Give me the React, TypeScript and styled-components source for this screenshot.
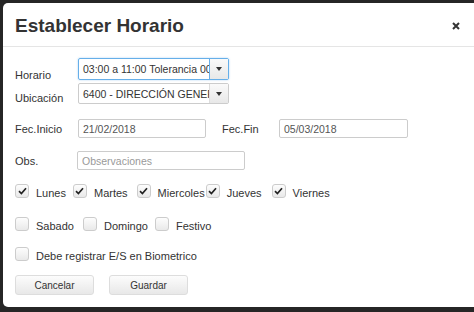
import React from 'react';
import styled, { createGlobalStyle } from 'styled-components';

const GlobalStyle = createGlobalStyle`
  html, body {
    margin: 0;
    padding: 0;
    background: #262626;
    font-family: "Liberation Sans", Arial, sans-serif;
    color: #333;
  }
  #root {
    padding: 3px 0 0 3px;
    height: 312px;
    box-sizing: border-box;
    overflow: hidden;
  }
`;

const Modal = styled.div`
  width: 480px;
  height: 304px;
  background: #fff;
  border-radius: 5px;
  display: flex;
  flex-direction: column;
`;

const Header = styled.div`
  height: 44px;
  box-sizing: border-box;
  border-bottom: 1px solid #e5e5e5;
  display: flex;
  align-items: center;
  padding: 0 0 0 12px;
  width: 471px;
`;

const Title = styled.h4`
  margin: 0;
  flex: 1;
  font-size: 19px;
  font-weight: bold;
  color: #333;
  padding-top: 2px;
`;

const Close = styled.span`
  display: flex;
  margin-right: 14px;
  padding-top: 3px;
  opacity: 0.85;
`;

const Body = styled.div`
  padding: 11px 0 0 12px;
  display: flex;
  flex-direction: column;
`;

const Row = styled.div<{ $mt?: number; $h: number }>`
  display: flex;
  align-items: center;
  height: ${(p) => p.$h}px;
  margin-top: ${(p) => p.$mt ?? 0}px;
`;

const Label = styled.span<{ $w: number; $dy?: number; $ml?: number }>`
  width: ${(p) => p.$w}px;
  margin-left: ${(p) => p.$ml ?? 0}px;
  font-size: 11px;
  color: #333;
  position: relative;
  top: ${(p) => p.$dy ?? 0}px;
`;

const Select = styled.div<{ $focus?: boolean }>`
  width: 151px;
  height: 100%;
  box-sizing: border-box;
  border: 1px solid ${(p) => (p.$focus ? '#66afe9' : '#ccc')};
  border-radius: 2px;
  display: flex;
  box-shadow: ${(p) => (p.$focus ? '0 0 2px rgba(102,175,233,0.6)' : 'none')};
`;

const SelectText = styled.span`
  flex: 1;
  overflow: hidden;
  white-space: nowrap;
  font-size: 10.5px;
  color: #333;
  padding: 0 0 0 4px;
  display: flex;
  align-items: center;
`;

const Arrow = styled.span<{ $focus?: boolean }>`
  width: 19px;
  flex-shrink: 0;
  box-sizing: border-box;
  border-left: 1px solid ${(p) => (p.$focus ? '#66afe9' : '#ddd')};
  background: linear-gradient(#fafafa, #e8e8e8);
  display: flex;
  align-items: center;
  justify-content: center;
  &::after {
    content: '';
    border-left: 3px solid transparent;
    border-right: 3px solid transparent;
    border-top: 4px solid #333;
  }
`;

const Input = styled.div<{ $w: number; $placeholder?: boolean }>`
  width: ${(p) => p.$w}px;
  height: 100%;
  box-sizing: border-box;
  border: 1px solid #ccc;
  border-radius: 2px;
  font-size: 10.5px;
  color: ${(p) => (p.$placeholder ? '#999' : '#555')};
  padding-left: 4px;
  display: flex;
  align-items: center;
`;

const Check = styled.span`
  width: 14px;
  height: 14px;
  box-sizing: border-box;
  border: 1px solid #ccc;
  border-radius: 3px;
  background: linear-gradient(#fdfdfd, #e9e9e9);
  display: flex;
  align-items: center;
  justify-content: center;
  margin-right: 7px;
  flex-shrink: 0;
`;

const CheckLabel = styled.span<{ $gap: number }>`
  font-size: 11px;
  color: #333;
  margin-right: ${(p) => p.$gap}px;
  position: relative;
  top: 2px;
`;

const Button = styled.button<{ $w: number; $mr?: number }>`
  width: ${(p) => p.$w}px;
  height: 20px;
  margin-right: ${(p) => p.$mr ?? 0}px;
  border: 1px solid #ddd;
  border-radius: 3px;
  background: linear-gradient(#fcfcfc, #e8e8e8);
  font-family: "Liberation Sans", Arial, sans-serif;
  font-size: 10px;
  color: #333;
  padding: 0;
`;

const Tick = () => (
  <svg width="9" height="8" viewBox="0 0 9 8">
    <path d="M1 4.2 L3.4 6.5 L8 1.3" stroke="#222" strokeWidth="1.7" fill="none" />
  </svg>
);

const Cross = () => (
  <svg width="8" height="8" viewBox="0 0 8 8">
    <path d="M1 1 L7 7 M7 1 L1 7" stroke="#111" strokeWidth="2" />
  </svg>
);

const Box = ({ on, label, gap }: { on?: boolean; label: string; gap: number }) => (
  <>
    <Check>{on && <Tick />}</Check>
    <CheckLabel $gap={gap}>{label}</CheckLabel>
  </>
);

export default function App() {
  return (
    <>
      <GlobalStyle />
      <Modal>
        <Header>
          <Title>Establecer Horario</Title>
          <Close>
            <Cross />
          </Close>
        </Header>
        <Body>
          <Row $h={22}>
            <Label $w={63} $dy={6}>Horario</Label>
            <Select $focus>
              <SelectText>03:00 a 11:00 Tolerancia 00:10</SelectText>
              <Arrow $focus />
            </Select>
          </Row>
          <Row $h={21} $mt={3}>
            <Label $w={63} $dy={4}>Ubicación</Label>
            <Select>
              <SelectText>6400 - DIRECCIÓN GENERAL</SelectText>
              <Arrow />
            </Select>
          </Row>
          <Row $h={19} $mt={15}>
            <Label $w={63}>Fec.Inicio</Label>
            <Input $w={128}>21/02/2018</Input>
            <Label $w={57} $ml={16}>Fec.Fin</Label>
            <Input $w={129}>05/03/2018</Input>
          </Row>
          <Row $h={19} $mt={13}>
            <Label $w={62}>Obs.</Label>
            <Input $w={168} $placeholder>Observaciones</Input>
          </Row>
          <Row $h={14} $mt={14}>
            <Box on label="Lunes" gap={7} />
            <Box on label="Martes" gap={9} />
            <Box on label="Miercoles" gap={1} />
            <Box on label="Jueves" gap={10} />
            <Box on label="Viernes" gap={0} />
          </Row>
          <Row $h={14} $mt={19}>
            <Box label="Sabado" gap={9} />
            <Box label="Domingo" gap={7} />
            <Box label="Festivo" gap={0} />
          </Row>
          <Row $h={14} $mt={16}>
            <Box label="Debe registrar E/S en Biometrico" gap={0} />
          </Row>
          <Row $h={20} $mt={14}>
            <Button $w={79} $mr={15}>Cancelar</Button>
            <Button $w={79}>Guardar</Button>
          </Row>
        </Body>
      </Modal>
    </>
  );
}
